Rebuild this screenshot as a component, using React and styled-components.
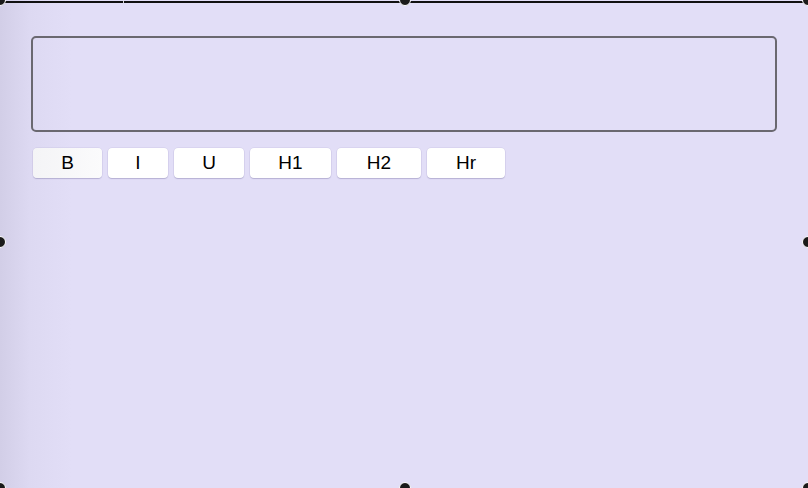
import React from 'react';
import styled, {createGlobalStyle} from 'styled-components';

const Global = createGlobalStyle`
  html, body {
    margin: 0;
    padding: 0;
    width: 808px;
    height: 488px;
    overflow: hidden;
  }
  body {
    font-family: "Liberation Sans", Arial, sans-serif;
  }
`;

const tools = [
    {label: 'B', width: 69, active: true},
    {label: 'I', width: 60},
    {label: 'U', width: 70},
    {label: 'H1', width: 81},
    {label: 'H2', width: 84},
    {label: 'Hr', width: 78},
];

const handles = [
    {x: 0, y: 0},
    {x: 405, y: 0},
    {x: 808, y: 0},
    {x: 0, y: 242},
    {x: 808, y: 242},
    {x: 0, y: 488},
    {x: 405, y: 488},
    {x: 808, y: 488},
];

const App = () => (
    <Frame>
        <Global/>
        <TopRule/>
        <Editor>
            <Area/>
            <Toolbar>
                {tools.map(t => (
                    <ToolButton key={t.label} $w={t.width} $active={t.active}>
                        {t.label}
                    </ToolButton>
                ))}
            </Toolbar>
        </Editor>
        {handles.map((h, i) => (
            <Handle key={i} style={{left: h.x, top: h.y}}/>
        ))}
    </Frame>
);

const Frame = styled.div`
  position: relative;
  width: 808px;
  height: 488px;
  overflow: hidden;
  background: linear-gradient(90deg, #d2cee7 0px, #ddd9f2 30px, #e2def7 72px, #e2def7 100%);
`;

const TopRule = styled.div`
  position: absolute;
  left: 0;
  right: 0;
  top: 1px;
  height: 2px;
  background: #111;
  &::after {
    content: '';
    position: absolute;
    left: 123px;
    top: 0;
    width: 1px;
    height: 2px;
    background: #d8d8d8;
  }
`;

const Editor = styled.div`
  display: flex;
  flex-direction: column;
  gap: 16px;
  padding: 36px 31px 0 31px;
`;

const Area = styled.div`
  width: 742px;
  height: 92px;
  border: 2px solid #6a6870;
  border-radius: 5px;
`;

const Toolbar = styled.div`
  display: flex;
  gap: 6px;
  padding-left: 2px;
`;

const ToolButton = styled.button`
  width: ${p => p.$w}px;
  height: 30px;
  padding: 0;
  border: none;
  border-radius: 4px;
  background: ${p => p.$active ? 'linear-gradient(90deg, #f4f4f6, #fbfbfc)' : '#fff'};
  box-shadow: 0 1px 1px rgba(80, 70, 130, 0.25), 0 0 0 0.5px rgba(80, 70, 130, 0.12);
  font-family: "Liberation Sans", Arial, sans-serif;
  font-size: 19px;
  color: #000;
  display: flex;
  align-items: center;
  justify-content: center;
`;

const Handle = styled.div`
  position: absolute;
  width: 10px;
  height: 10px;
  margin: -6px 0 0 -6px;
  border-radius: 50%;
  background: #1a1a1a;
  border: 1px solid #fff;
`;

export default App;
